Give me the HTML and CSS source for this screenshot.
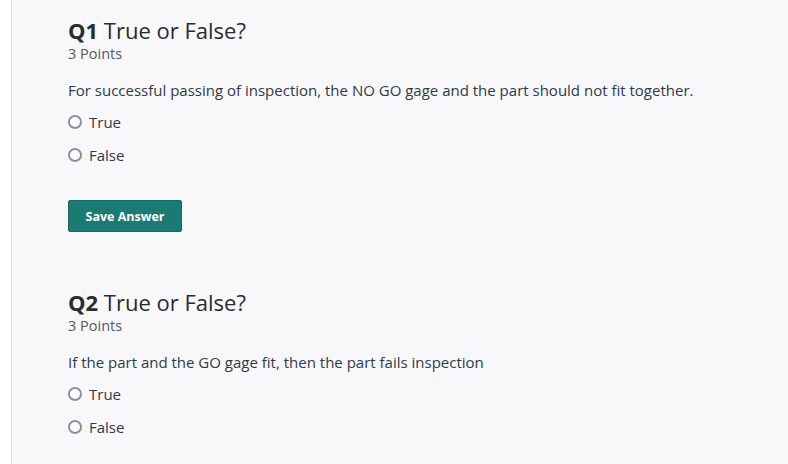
FILE: index.html
```html
<!DOCTYPE html>
<html lang="en">
<head>
    <meta charset="UTF-8">
    <title>Quiz</title>
    <link rel="stylesheet" href="styles.css">
</head>
<body>
    <div class="quiz">
        <div class="question">
            <h2 class="question-title"><b>Q1</b> True or False?</h2>
            <p class="points">3 Points</p>
            <p class="prompt">For successful passing of inspection, the NO GO gage and the part should not fit together.</p>
            <label class="option"><span class="radio"></span>True</label>
            <label class="option"><span class="radio"></span>False</label>
            <button class="save-btn">Save Answer</button>
        </div>

        <div class="question">
            <h2 class="question-title"><b>Q2</b> True or False?</h2>
            <p class="points">3 Points</p>
            <p class="prompt">If the part and the GO gage fit, then the part fails inspection</p>
            <label class="option"><span class="radio"></span>True</label>
            <label class="option"><span class="radio"></span>False</label>
        </div>
    </div>
</body>
</html>
```

FILE: styles.css
```css
/* Page */
body {
    margin: 0;
    padding: 0 0 0 11px;
    background-color: #fff;
    font-family: "Open Sans", sans-serif;
    color: #2d3b45;
}

/* Main quiz column */
.quiz {
    min-height: 464px;
    background-color: #f8f8fb;
    border-left: 1px solid #e2e2e8;
    padding: 16px 0 0 56px;
    box-sizing: border-box;
}

.question {
    margin-bottom: 56px;
}

.question-title {
    margin: 0;
    font-size: 22px;
    font-weight: normal;
    line-height: 28px;
    color: #262c30;
}

.question-title b {
    font-weight: bold;
}

.points {
    margin: 0;
    font-size: 14.5px;
    line-height: 20px;
    color: #555a5e;
}

.prompt {
    margin: 15px 0 4px;
    font-size: 15px;
    line-height: 22px;
    color: #2d3b45;
}

/* Radio options */
.option {
    display: flex;
    align-items: center;
    gap: 7px;
    height: 33px;
    font-size: 15px;
    color: #2d3b45;
}

.radio {
    width: 10px;
    height: 10px;
    border: 2px solid #8b9196;
    border-radius: 50%;
    background: #fff;
}

/* Save button */
.save-btn {
    margin-top: 29px;
    width: 114px;
    height: 32px;
    background-color: #1b7b73;
    border: 1px solid #146b64;
    border-radius: 2px;
    color: #fff;
    font-family: inherit;
    font-size: 12.5px;
    font-weight: bold;
    cursor: pointer;
}
```
